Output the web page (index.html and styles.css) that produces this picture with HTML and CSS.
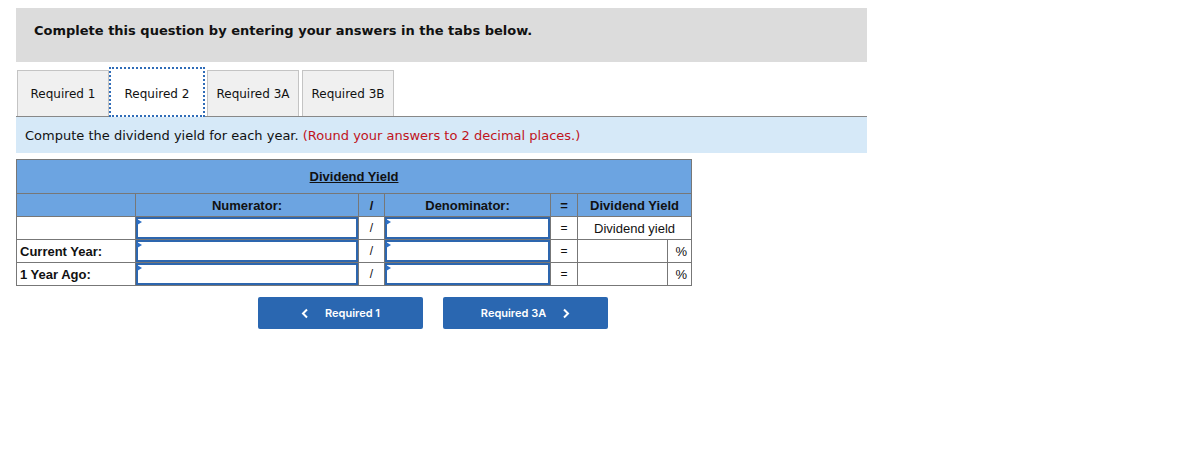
FILE: index.html
```html
<!DOCTYPE html>
<html lang="en">
<head>
    <meta charset="UTF-8">
    <title>Dividend Yield</title>
    <link rel="stylesheet" href="styles.css">
</head>
<body>
    <div class="page">
        <div class="intro">Complete this question by entering your answers in the tabs below.</div>

        <div class="tabs">
            <div class="tab">Required 1</div>
            <div class="tab active">Required 2</div>
            <div class="tab">Required 3A</div>
            <div class="tab">Required 3B</div>
        </div>

        <div class="prompt">
            Compute the dividend yield for each year. <span class="note">(Round your answers to 2 decimal places.)</span>
        </div>

        <table class="grid">
            <colgroup>
                <col class="c-label">
                <col class="c-num">
                <col class="c-op">
                <col class="c-den">
                <col class="c-eq">
                <col class="c-val">
                <col class="c-pct">
            </colgroup>
            <tr class="head">
                <th colspan="7" class="title"><u>Dividend Yield</u></th>
            </tr>
            <tr class="head">
                <th></th>
                <th>Numerator:</th>
                <th>/</th>
                <th>Denominator:</th>
                <th>=</th>
                <th colspan="2">Dividend Yield</th>
            </tr>
            <tr>
                <td></td>
                <td class="field"><div class="box"></div></td>
                <td class="op">/</td>
                <td class="field"><div class="box"></div></td>
                <td class="op">=</td>
                <td colspan="2" class="center">Dividend yield</td>
            </tr>
            <tr>
                <td class="label">Current Year:</td>
                <td class="field"><div class="box"></div></td>
                <td class="op">/</td>
                <td class="field"><div class="box"></div></td>
                <td class="op">=</td>
                <td></td>
                <td class="pct">%</td>
            </tr>
            <tr>
                <td class="label">1 Year Ago:</td>
                <td class="field"><div class="box"></div></td>
                <td class="op">/</td>
                <td class="field"><div class="box"></div></td>
                <td class="op">=</td>
                <td></td>
                <td class="pct">%</td>
            </tr>
        </table>

        <div class="nav">
            <button class="nav-btn">
                <svg width="8" height="11" viewBox="0 0 8 11"><path d="M6 1.5 L2 5.5 L6 9.5" fill="none" stroke="#fff" stroke-width="2"/></svg>
                <span>Required 1</span>
            </button>
            <button class="nav-btn">
                <span>Required 3A</span>
                <svg width="8" height="11" viewBox="0 0 8 11"><path d="M2 1.5 L6 5.5 L2 9.5" fill="none" stroke="#fff" stroke-width="2"/></svg>
            </button>
        </div>
    </div>
</body>
</html>
```

FILE: styles.css
```css
body {
    margin: 0;
    background: #fff;
    color: #111;
}

.page {
    padding: 8px 16px;
    width: 851px;
}

.intro {
    background: #dcdcdc;
    height: 54px;
    box-sizing: border-box;
    padding: 15px 18px 0;
    font-family: "DejaVu Sans", Verdana, sans-serif;
    font-weight: bold;
    font-size: 13px;
}

.tabs {
    display: flex;
    align-items: flex-end;
    margin-top: 7px;
    border-bottom: 1px solid #888;
    height: 47px;
}

.tab {
    font-family: "DejaVu Sans", Verdana, sans-serif;
    font-size: 12px;
    background: #f0f0f0;
    border: 1px solid #c4c4c4;
    border-bottom: none;
    height: 46px;
    width: 92px;
    box-sizing: border-box;
    display: flex;
    align-items: center;
    justify-content: center;
    padding-top: 1px;
    margin-right: 2px;
    margin-left: 1px;
}

.tab:first-child {
    margin-left: 1px;
    margin-right: 0;
}

.tab.active {
    background: #fff;
    border: 2px dotted #2f6cb8;
    height: 50px;
    width: 96px;
    padding-top: 3px;
    margin: 0 1px -1px 0;
    position: relative;
}

.prompt {
    background: #d6e9f8;
    height: 36px;
    box-sizing: border-box;
    padding: 11px 9px 0;
    font-family: "DejaVu Sans", Verdana, sans-serif;
    font-size: 13px;
}

.note {
    color: #c0141c;
}

.grid {
    margin-top: 6px;
    border-collapse: collapse;
    table-layout: fixed;
    width: 676px;
    font-family: "Liberation Sans", Arial, sans-serif;
    font-size: 13px;
}

.c-label { width: 119px; }
.c-num { width: 223px; }
.c-op { width: 26px; }
.c-den { width: 166px; }
.c-eq { width: 27px; }
.c-val { width: 90px; }
.c-pct { width: 24px; }

.grid th,
.grid td {
    border: 1px solid #777;
    padding: 0;
    height: 22px;
}

.head th {
    background: #6ca4e1;
    font-weight: bold;
    text-align: center;
}

.head .title {
    height: 33px;
}

.grid td {
    text-align: center;
}

.grid td.label {
    text-align: left;
    font-weight: bold;
    padding-left: 3px;
}

.grid td.op {
    font-size: 12px;
}

.grid td.pct {
    text-align: right;
    padding-right: 4px;
}

.grid td.field {
    padding: 0;
}

.box {
    position: relative;
    height: 22px;
    border: 2px solid #2d66ae;
    box-sizing: border-box;
}

.box::before {
    content: "";
    position: absolute;
    left: -1px;
    top: 0;
    border-left: 5px solid #2d6fc4;
    border-top: 3px solid transparent;
    border-bottom: 3px solid transparent;
}

.nav {
    display: flex;
    gap: 20px;
    margin: 11px 0 0 242px;
}

.nav-btn {
    width: 165px;
    height: 32px;
    background: #2a67b1;
    border: none;
    border-radius: 2px;
    color: #fff;
    font-family: Inter, "Liberation Sans", sans-serif;
    font-weight: 600;
    font-size: 11px;
    display: flex;
    align-items: center;
    justify-content: center;
    gap: 16px;
}
```
